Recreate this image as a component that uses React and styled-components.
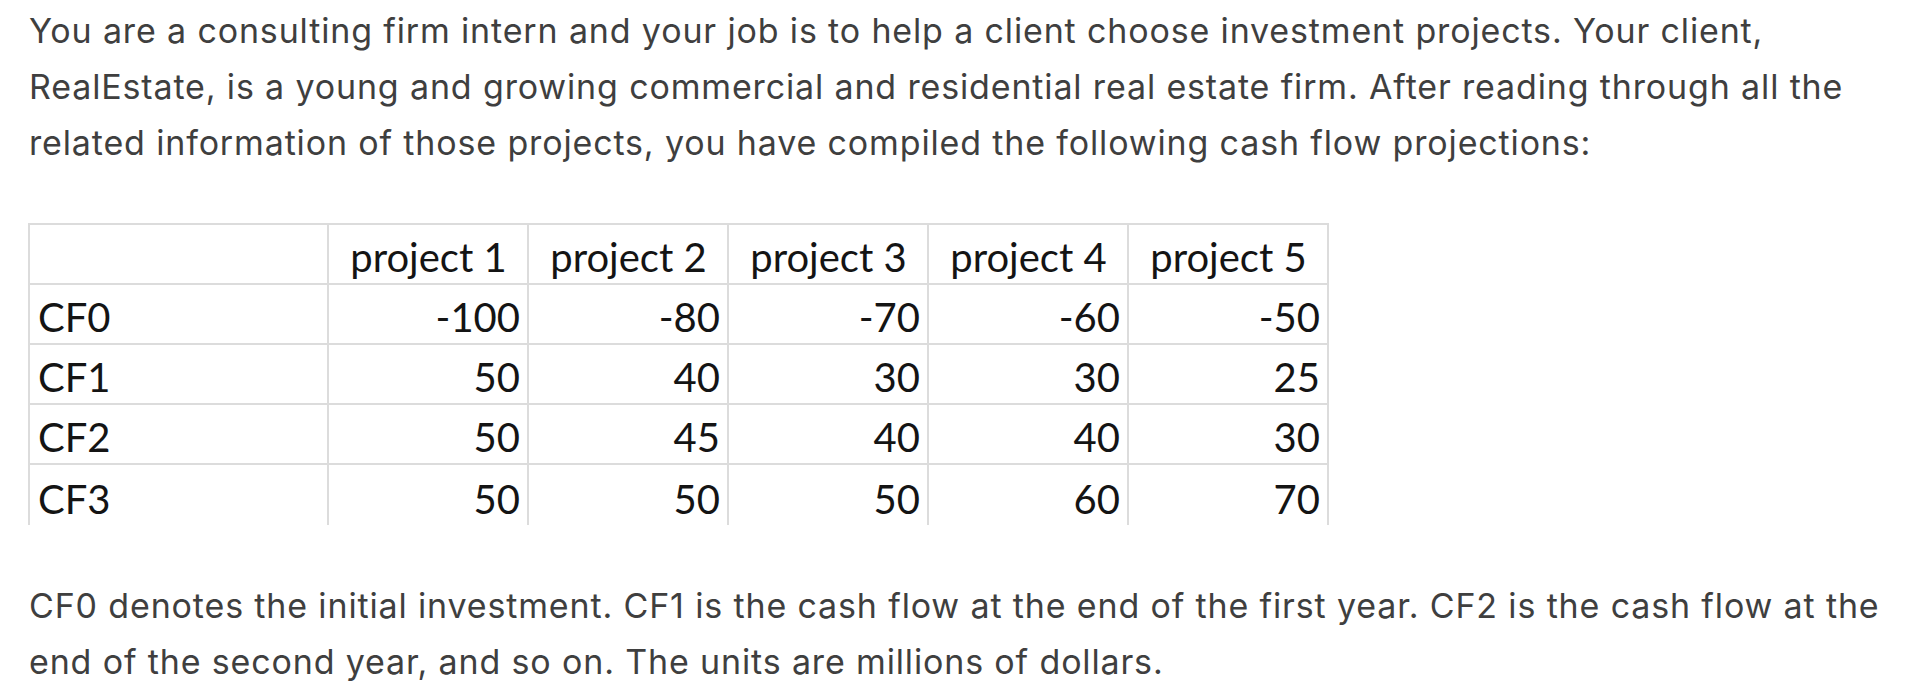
import styled, { createGlobalStyle } from "styled-components";

const GlobalStyle = createGlobalStyle`
    body {
        margin: 0;
        background: #ffffff;
    }
`

const Wrapper = styled.div`
    padding: 3px 14px 0 29px;
    font-family: Inter, "Liberation Sans", sans-serif;
    color: #3f3f3f;
`

const Paragraph = styled.p`
    margin: 0;
    font-size: 34px;
    line-height: 56px;
    letter-spacing: 0.85px;
`

const TableBox = styled.div`
    display: grid;
    grid-template-columns: 299px repeat(5, 200px);
    width: max-content;
    margin: 52px 0 53px -1px;
    border-top: 2px solid #dcdcdc;
    border-left: 2px solid #dcdcdc;
    font-family: Lato, "Open Sans", sans-serif;
    color: #141414;
`

const Cell = styled.div`
    box-sizing: border-box;
    height: 60px;
    display: flex;
    align-items: flex-end;
    justify-content: ${p => p.$align === "left" ? "flex-start" : p.$align === "center" ? "center" : "flex-end"};
    padding: 0 7px 6px 8px;
    border-right: 2px solid #dcdcdc;
    border-bottom: ${p => p.$last ? "none" : "2px solid #dcdcdc"};
    font-size: 40px;
    line-height: 1;
`

const projects = ["project 1", "project 2", "project 3", "project 4", "project 5"]

const rows = [
    ["CF0", -100, -80, -70, -60, -50],
    ["CF1", 50, 40, 30, 30, 25],
    ["CF2", 50, 45, 40, 40, 30],
    ["CF3", 50, 50, 50, 60, 70],
]

function App() {
    return (
        <Wrapper>
            <GlobalStyle />
            <Paragraph>
                You are a consulting firm intern and your job is to help a client choose investment projects. Your client, RealEstate, is a young and growing commercial and residential real estate firm. After reading through all the related information of those projects, you have compiled the following cash flow projections:
            </Paragraph>

            <TableBox>
                <Cell $align="left" />
                {projects.map(p => (
                    <Cell key={p} $align="center">{p}</Cell>
                ))}
                {rows.map((row, i) => row.map((val, j) => (
                    <Cell key={i + "-" + j} $align={j === 0 ? "left" : "right"} $last={i === rows.length - 1}>
                        {val}
                    </Cell>
                )))}
            </TableBox>

            <Paragraph>
                CF0 denotes the initial investment. CF1 is the cash flow at the end of the first year. CF2 is the cash flow at the end of the second year, and so on. The units are millions of dollars.
            </Paragraph>
        </Wrapper>
    )
}

export default App
